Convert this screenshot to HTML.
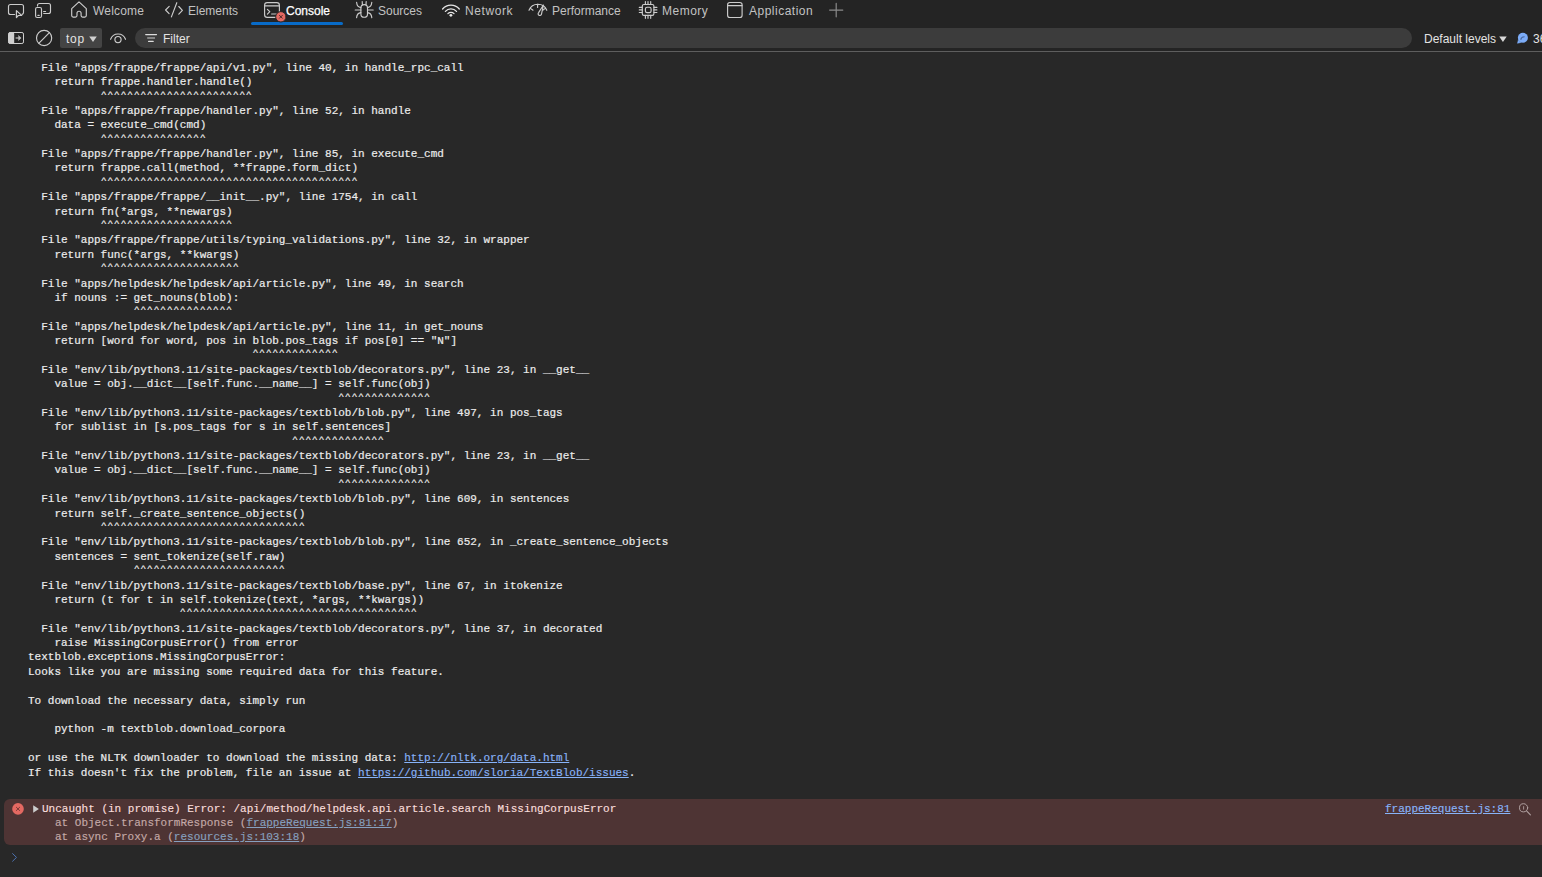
<!DOCTYPE html>
<html><head><meta charset="utf-8">
<style>
*{margin:0;padding:0;box-sizing:border-box}
html,body{width:1542px;height:877px;overflow:hidden;background:#282828}
body{position:relative;font-family:"Liberation Sans",sans-serif}
#tabs{position:absolute;left:0;top:0;width:1542px;height:25px;background:#242424}
#tb{position:absolute;left:0;top:25px;width:1542px;height:26px;background:#242424}
#sep{position:absolute;left:0;top:51px;width:1542px;height:1px;background:#5e5e5e}
.t{position:absolute;font-size:12px;color:#c2c2c2;white-space:pre;line-height:14px}
.tab{top:4px}
#log{position:absolute;left:28px;top:52px;font-family:"Liberation Mono",monospace;font-size:11px;line-height:14px;color:#ececec;white-space:pre;-webkit-text-stroke:0.2px #ececec}
.lk{color:#88b3f8;text-decoration:underline;-webkit-text-stroke:0.15px currentColor}
.ln{position:absolute;left:0}
.c{font-size:10px;letter-spacing:0.6px;position:relative;top:-3px;line-height:0;display:inline-block;transform:scaleY(0.78);transform-origin:0 0}
#err{position:absolute;left:4px;top:799px;width:1545px;height:46px;background:#4e3434;border-radius:6px}
.m{position:absolute;font-family:"Liberation Mono",monospace;font-size:11px;line-height:14px;white-space:pre;-webkit-text-stroke:0.15px currentColor}
</style></head><body>
<div id="tabs"></div>
<div id="tb"></div>
<div id="sep"></div>

<div class="t tab" style="left:93px;letter-spacing:0.2px">Welcome</div>
<div class="t tab" style="left:188px">Elements</div>
<div class="t tab" style="left:286px;color:#fff;-webkit-text-stroke:0.25px #fff">Console</div>
<div class="t tab" style="left:378px">Sources</div>
<div class="t tab" style="left:465px;letter-spacing:0.6px">Network</div>
<div class="t tab" style="left:552px">Performance</div>
<div class="t tab" style="left:662px;letter-spacing:0.5px">Memory</div>
<div class="t tab" style="left:749px;letter-spacing:0.5px">Application</div>

<div style="position:absolute;left:251px;top:22px;width:92px;height:3px;border-radius:2px;background:#086bc8"></div>

<div style="position:absolute;left:60px;top:28px;width:42px;height:20px;border-radius:2px;background:#444"></div>
<div class="t" style="left:66px;top:32px;letter-spacing:0.7px;color:#e3e3e3">top</div>
<div style="position:absolute;left:135px;top:28px;width:1277px;height:20px;border-radius:10px;background:#3c3c3c"></div>
<div class="t" style="left:163px;top:32px;color:#e3e3e3">Filter</div>
<div class="t" style="left:1424px;top:32px;color:#e3e3e3">Default levels</div>
<div class="t" style="left:1533px;top:32px;color:#e3e3e3">36</div>

<div id="log">
<div class="ln" style="top:9px">  File "apps/frappe/frappe/api/v1.py", line 40, in handle_rpc_call</div>
<div class="ln" style="top:23px">    return frappe.handler.handle()</div>
<div class="ln" style="top:38px">           <span class="c">^^^^^^^^^^^^^^^^^^^^^^^</span></div>
<div class="ln" style="top:52px">  File "apps/frappe/frappe/handler.py", line 52, in handle</div>
<div class="ln" style="top:66px">    data = execute_cmd(cmd)</div>
<div class="ln" style="top:81px">           <span class="c">^^^^^^^^^^^^^^^^</span></div>
<div class="ln" style="top:95px">  File "apps/frappe/frappe/handler.py", line 85, in execute_cmd</div>
<div class="ln" style="top:109px">    return frappe.call(method, **frappe.form_dict)</div>
<div class="ln" style="top:124px">           <span class="c">^^^^^^^^^^^^^^^^^^^^^^^^^^^^^^^^^^^^^^^</span></div>
<div class="ln" style="top:138px">  File "apps/frappe/frappe/__init__.py", line 1754, in call</div>
<div class="ln" style="top:153px">    return fn(*args, **newargs)</div>
<div class="ln" style="top:167px">           <span class="c">^^^^^^^^^^^^^^^^^^^^</span></div>
<div class="ln" style="top:181px">  File "apps/frappe/frappe/utils/typing_validations.py", line 32, in wrapper</div>
<div class="ln" style="top:196px">    return func(*args, **kwargs)</div>
<div class="ln" style="top:210px">           <span class="c">^^^^^^^^^^^^^^^^^^^^^</span></div>
<div class="ln" style="top:225px">  File "apps/helpdesk/helpdesk/api/article.py", line 49, in search</div>
<div class="ln" style="top:239px">    if nouns := get_nouns(blob):</div>
<div class="ln" style="top:253px">                <span class="c">^^^^^^^^^^^^^^^</span></div>
<div class="ln" style="top:268px">  File "apps/helpdesk/helpdesk/api/article.py", line 11, in get_nouns</div>
<div class="ln" style="top:282px">    return [word for word, pos in blob.pos_tags if pos[0] == "N"]</div>
<div class="ln" style="top:296px">                                  <span class="c">^^^^^^^^^^^^^</span></div>
<div class="ln" style="top:311px">  File "env/lib/python3.11/site-packages/textblob/decorators.py", line 23, in __get__</div>
<div class="ln" style="top:325px">    value = obj.__dict__[self.func.__name__] = self.func(obj)</div>
<div class="ln" style="top:340px">                                               <span class="c">^^^^^^^^^^^^^^</span></div>
<div class="ln" style="top:354px">  File "env/lib/python3.11/site-packages/textblob/blob.py", line 497, in pos_tags</div>
<div class="ln" style="top:368px">    for sublist in [s.pos_tags for s in self.sentences]</div>
<div class="ln" style="top:383px">                                        <span class="c">^^^^^^^^^^^^^^</span></div>
<div class="ln" style="top:397px">  File "env/lib/python3.11/site-packages/textblob/decorators.py", line 23, in __get__</div>
<div class="ln" style="top:411px">    value = obj.__dict__[self.func.__name__] = self.func(obj)</div>
<div class="ln" style="top:426px">                                               <span class="c">^^^^^^^^^^^^^^</span></div>
<div class="ln" style="top:440px">  File "env/lib/python3.11/site-packages/textblob/blob.py", line 609, in sentences</div>
<div class="ln" style="top:455px">    return self._create_sentence_objects()</div>
<div class="ln" style="top:469px">           <span class="c">^^^^^^^^^^^^^^^^^^^^^^^^^^^^^^^</span></div>
<div class="ln" style="top:483px">  File "env/lib/python3.11/site-packages/textblob/blob.py", line 652, in _create_sentence_objects</div>
<div class="ln" style="top:498px">    sentences = sent_tokenize(self.raw)</div>
<div class="ln" style="top:512px">                <span class="c">^^^^^^^^^^^^^^^^^^^^^^^</span></div>
<div class="ln" style="top:527px">  File "env/lib/python3.11/site-packages/textblob/base.py", line 67, in itokenize</div>
<div class="ln" style="top:541px">    return (t for t in self.tokenize(text, *args, **kwargs))</div>
<div class="ln" style="top:555px">                       <span class="c">^^^^^^^^^^^^^^^^^^^^^^^^^^^^^^^^^^^^</span></div>
<div class="ln" style="top:570px">  File "env/lib/python3.11/site-packages/textblob/decorators.py", line 37, in decorated</div>
<div class="ln" style="top:584px">    raise MissingCorpusError() from error</div>
<div class="ln" style="top:598px">textblob.exceptions.MissingCorpusError:</div>
<div class="ln" style="top:613px">Looks like you are missing some required data for this feature.</div>
<div class="ln" style="top:642px">To download the necessary data, simply run</div>
<div class="ln" style="top:670px">    python -m textblob.download_corpora</div>
<div class="ln" style="top:699px">or use the NLTK downloader to download the missing data: <span class="lk">http://nltk.org/data.html</span></div>
<div class="ln" style="top:714px">If this doesn't fix the problem, file an issue at <span class="lk">https://github.com/sloria/TextBlob/issues</span>.</div>
</div>

<div id="err"></div>
<div class="m" style="left:42px;top:802px;color:#f9dedc">Uncaught (in promise) Error: /api/method/helpdesk.api.article.search MissingCorpusError</div>
<div class="m" style="left:55px;top:816px;color:#c4a9a7">at Object.transformResponse (<span class="lk" style="color:#86a0bf">frappeRequest.js:81:17</span>)</div>
<div class="m" style="left:55px;top:830px;color:#c4a9a7">at async Proxy.a (<span class="lk" style="color:#86a0bf">resources.js:103:18</span>)</div>
<div class="m" style="left:1385px;top:802px"><span class="lk">frappeRequest.js:81</span></div>

<svg id="ic" width="1542" height="877" style="position:absolute;left:0;top:0" fill="none" stroke="#cccccc" stroke-width="1.15" stroke-linecap="round" stroke-linejoin="round">
<!-- inspect -->
<path d="M14.6 14.5h-4.1a2 2 0 0 1-2-2v-6a2 2 0 0 1 2-2h11a2 2 0 0 1 2 2v6a2 2 0 0 1-1.4 1.9"/>
<path d="M16.4 10.6v7l1.9-2.1h3.4z"/>
<!-- device -->
<path d="M37.5 6V5.5a2 2 0 0 1 2-2h9a2 2 0 0 1 2 2v6a2 2 0 0 1-2 2h-4.8"/>
<rect x="35.6" y="7.5" width="5.9" height="10" rx="1.5"/>
<path d="M37.9 15.4h1.3M43.6 11.5h2"/>
<!-- home -->
<path d="M71.7 8.6L79 1.9l7.3 6.7v7a1.5 1.5 0 0 1-1.5 1.5h-2.2a1.5 1.5 0 0 1-1.5-1.5v-2.3a2.05 2.05 0 0 0-4.1 0v2.3a1.5 1.5 0 0 1-1.5 1.5h-2.3a1.5 1.5 0 0 1-1.5-1.5z"/>
<!-- elements -->
<path d="M169.2 6.3l-3.6 3.7 3.5 3.6M176.8 2.7l-5.4 14.2M178.8 6.5l3.6 3.9-3.6 3.8"/>
<!-- console -->
<rect x="264.6" y="2.6" width="14.8" height="14.8" rx="2.6"/>
<path d="M265 5.9h14M267.4 9.4l2.4 2.3-2.4 2.4M271.6 14h5.2"/>
<circle cx="280.9" cy="16.8" r="5.2" fill="#e46962" stroke="#242424" stroke-width="1"/>
<path d="M279.5 15.4l2.8 2.8M282.3 15.4l-2.8 2.8" stroke="#3a2020" stroke-width="0.9"/>
<!-- sources bug -->
<rect x="360.9" y="4.6" width="6.6" height="12.6" rx="3.3"/>
<path d="M362.4 4.8l-.2-3.3M366 4.8l.2-3.3M360.9 7.6Q357 7.2 356.6 2.3M367.5 7.6Q371.4 7.2 371.8 2.3M355.2 10h5.7M367.5 10h5.7M360.9 12.6Q357 13 356.6 17.6M367.5 12.6Q371.4 13 371.8 17.6"/>
<!-- network -->
<g stroke="#e6e6e6" stroke-width="1.3">
<path d="M442.6 9A11 11 0 0 1 459.3 9M445.4 11.4A7.2 7.2 0 0 1 456.5 11.4M447.9 13.6A4.3 4.3 0 0 1 454 13.6"/>
</g>
<circle cx="450.9" cy="15.3" r="1.4" fill="#e6e6e6" stroke="none"/>
<!-- performance -->
<path d="M529 10.3A9.6 9.6 0 0 1 546.8 10.3M537.6 4.3v3.2M530.8 8.6l2.2 1.6M544.9 8.6l-2.2 1.6"/>
<path d="M543.4 5L538.6 12.6a1.7 1.7 0 1 0 2.9 1.5z"/>
<!-- memory -->
<rect x="642.3" y="4.5" width="11.6" height="10.8" rx="1.6"/>
<rect x="645.4" y="7.2" width="5.7" height="5.4" rx="1.7"/>
<path d="M645.4 1.5v3M648 1.5v3M650.7 1.5v3M645.4 15.3v3M648 15.3v3M650.7 15.3v3M639.3 7.4h3M639.3 9.9h3M639.3 12.5h3M653.9 7.4h3M653.9 9.9h3M653.9 12.5h3"/>
<!-- application -->
<rect x="727.6" y="2.5" width="14.5" height="15" rx="2.3"/>
<path d="M728 5.6h14"/>
<!-- plus -->
<path d="M829.6 10.1h13.2M836.2 3.4v13.4" stroke="#8a8a8a" stroke-width="1.2"/>
<!-- sidebar -->
<rect x="8.5" y="32.5" width="15" height="11" rx="1.6" stroke="#d0d0d0" stroke-width="1"/>
<rect x="8.5" y="32.5" width="5.7" height="11" rx="1.2" fill="#d0d0d0" stroke="none"/>
<path d="M15.6 38h3.3" stroke="#9a9a9a" stroke-width="1.6" stroke-linecap="butt"/>
<path d="M18.8 35.8l2.3 2.2-2.3 2.2z" fill="#bdbdbd" stroke="#bdbdbd" stroke-width="0.6"/>
<!-- clear -->
<circle cx="44.1" cy="38" r="7.6"/>
<path d="M39 43.1l10.4-10.4"/>
<!-- top triangle -->
<path d="M89.2 36.4h7.6l-3.8 5.5z" fill="#d0d0d0" stroke="none"/>
<!-- eye -->
<path d="M110.6 39.3A7.9 7.9 0 0 1 125.5 39.3"/>
<circle cx="118" cy="39.6" r="3.1"/>
<!-- filter icon -->
<path d="M145.7 34.6h10.8M148.6 41.4h4.6" stroke="#dddddd" stroke-width="1.2"/>
<path d="M147.2 38h7.8" stroke="#9a9a9a" stroke-width="1.6" stroke-linecap="butt"/>
<!-- default levels triangle -->
<path d="M1499.2 36.4h7.5l-3.75 5.5z" fill="#d8d8d8" stroke="none"/>
<!-- chat -->
<circle cx="1522.9" cy="37.8" r="5" fill="#7cacf8" stroke="none"/>
<path d="M1518.3 40l-.8 3.3 3.6-.9z" fill="#7cacf8" stroke="#7cacf8" stroke-width="0.5"/>
<path d="M1520.9 39.4Q1521.1 37.1 1524.2 36.8" stroke="#4a6aa0" stroke-width="1.1"/>
<!-- error icon -->
<circle cx="18" cy="808.9" r="5.8" fill="#e46962" stroke="none"/>
<path d="M16.4 807.3l3.2 3.2M19.6 807.3l-3.2 3.2" stroke="#5a2a28" stroke-width="0.8"/>
<path d="M33.2 805.2v7.6l5.7-3.8z" fill="#cccccc" stroke="none"/>
<!-- magnifier -->
<circle cx="1523.6" cy="807.8" r="4.1" stroke="#b0a0a0" stroke-width="1"/>
<path d="M1526.6 810.9l3.8 3.9" stroke="#b0a0a0" stroke-width="1.1"/>
<path d="M1523.6 806.6v2.6" stroke="#b0a0a0" stroke-width="0.9"/>
<!-- prompt -->
<path d="M12.6 853.6l3.9 3.8-3.9 3.8" stroke="#4d72b0" stroke-width="1"/>
</svg>
</body></html>
